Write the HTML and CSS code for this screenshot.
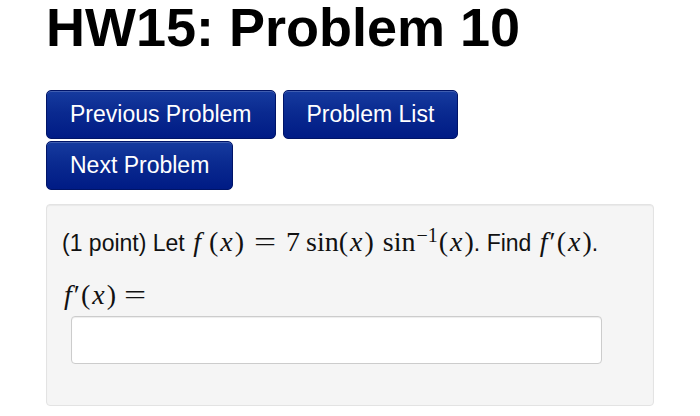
FILE: index.html
```html
<!DOCTYPE html>
<html lang="en">
<head>
<meta charset="utf-8">
<title>HW15: Problem 10</title>
<link rel="stylesheet" href="styles.css">
</head>
<body>
<h1 class="title">HW15: Problem 10</h1>
<div class="nav">
  <div class="nav-row">
    <a class="btn" href="#">Previous Problem</a>
    <a class="btn" href="#">Problem List</a>
  </div>
  <div class="nav-row">
    <a class="btn" href="#">Next Problem</a>
  </div>
</div>
<div class="problem">
  <p class="q">(1 point) Let <span class="m"><i class="f">f</i>(<i>x</i>)<span class="eq">=</span>7<span class="fn">sin</span>(<i>x</i>)<span class="fn fn2">sin</span><sup class="sup">−1</sup>(<i>x</i>)</span>. Find <span class="m"><i class="f">f</i><span class="pr">′</span>(<i>x</i>)</span>.</p>
  <p class="lbl"><span class="m"><i class="f">f</i><span class="pr">′</span>(<i>x</i>)<span class="eq eq2">=</span></span></p>
  <input class="answer" type="text" aria-label="answer">
</div>
</body>
</html>
```

FILE: styles.css
```css
html, body {
  background: #ffffff;
}
body {
  margin: 0;
  padding: 0 0 0 46px;
  font-family: "Liberation Sans", Arial, sans-serif;
  color: #000000;
}
.title {
  margin: 0 0 36px;
  font-size: 54px;
  line-height: 54px;
  font-weight: 700;
}
.nav {
  display: flex;
  flex-direction: column;
  gap: 2px;
}
.nav-row {
  display: flex;
  gap: 7px;
}
.btn {
  display: flex;
  align-items: center;
  height: 49px;
  box-sizing: border-box;
  padding: 0 23px;
  border: 1px solid #001468;
  border-radius: 5px;
  background: linear-gradient(to bottom, #163b9f 0%, #0a2a90 45%, #001b85 100%);
  box-shadow: inset 0 1px 0 rgba(255, 255, 255, 0.18);
  color: #ffffff;
  font-size: 23px;
  text-decoration: none;
}
.problem {
  margin-top: 14px;
  width: 608px;
  height: 202px;
  box-sizing: border-box;
  padding: 22px 0 0 15px;
  border: 1px solid #e3e3e3;
  border-radius: 4px;
  background: #f5f5f5;
  box-shadow: inset 0 1px 1px rgba(0, 0, 0, 0.05);
}
.q, .lbl {
  margin: 0;
  font-size: 23px;
  line-height: 30px;
  color: #111111;
}
.lbl {
  margin-top: 22px;
}
.m {
  font-family: "Liberation Serif", "Times New Roman", serif;
  font-size: 28px;
  line-height: 30px;
}
.m i {
  font-style: italic;
  margin: 0 2px;
}
.m i.f {
  margin-left: 2px;
  margin-right: 8px;
}
.pr {
  margin-left: -6px;
  margin-right: 1px;
}
.eq {
  display: inline-block;
  width: 26px;
  text-align: center;
  margin: 0 8px 0 8px;
  transform: scaleX(1.4);
}
.eq2 {
  margin-left: 6px;
}
.fn {
  margin-left: 6px;
}
.fn2 {
  margin-left: 9px;
}
.sup {
  font-size: 20px;
  line-height: 0;
  vertical-align: 9px;
  margin-left: 1px;
  margin-right: 1px;
}
.answer {
  display: block;
  margin: 5px 0 0 9px;
  width: 531px;
  height: 48px;
  box-sizing: border-box;
  border: 1px solid #cccccc;
  border-radius: 4px;
  background: #ffffff;
  box-shadow: inset 0 1px 1px rgba(0, 0, 0, 0.075);
}
```
